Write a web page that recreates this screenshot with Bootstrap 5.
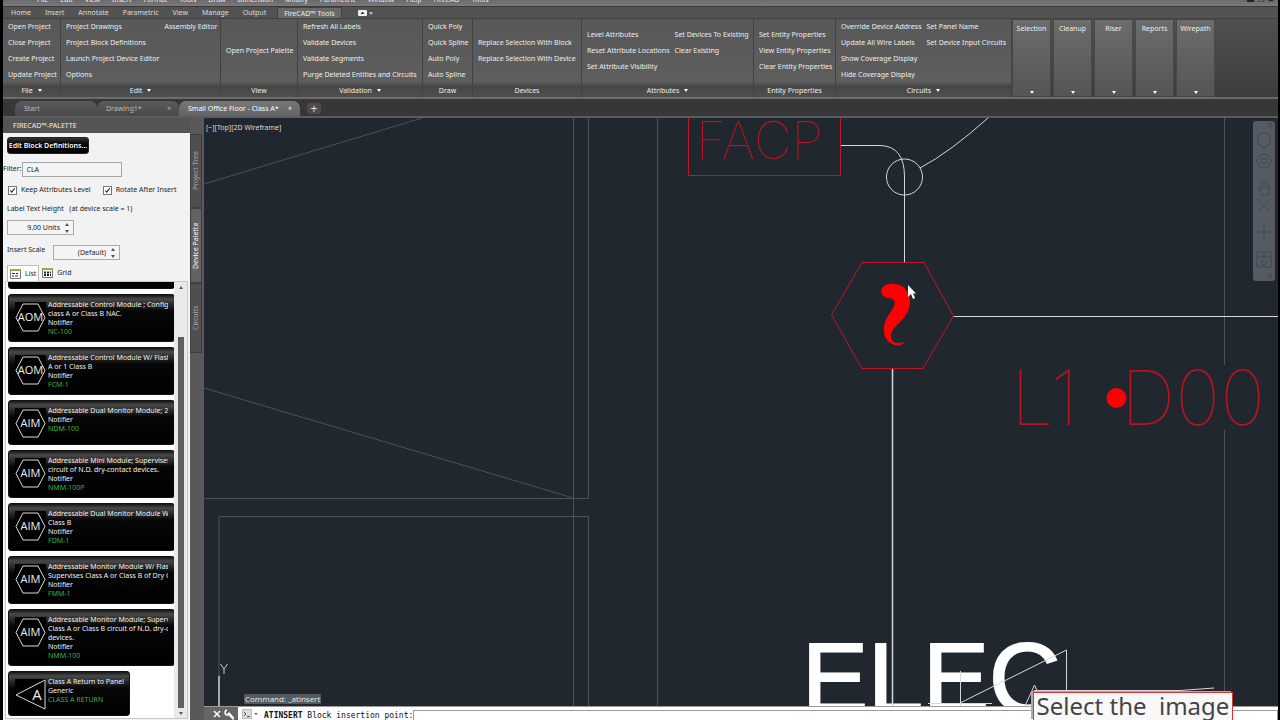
<!DOCTYPE html>
<html lang="en">
<head>
<meta charset="utf-8">
<meta name="viewport" content="width=device-width, initial-scale=1">
<title>FireCAD Tools</title>
<link href="https://cdn.jsdelivr.net/npm/bootstrap@5.3.0/dist/css/bootstrap.min.css" rel="stylesheet">
<style>
  body { background:#000; color:#eee; font-family:"Noto Sans","Open Sans",sans-serif; font-size:7px; line-height:16px; padding:0 2px 0 3px; }
  button, input { font:inherit; color:inherit; }
  button { background:none; border:0; padding:0; text-align:left; white-space:nowrap; }
  a { color:inherit; text-decoration:none; white-space:nowrap; }
  .menubar { height:7px; background:linear-gradient(#6b696b,#7b797b); border-bottom:1px solid #3a3a3a; line-height:12px; padding-left:34px; gap:12px; }
  .wincontrols { color:#222; gap:4px; margin-right:4px; }
  .ribbon-tabs { height:12px; background:#535353; border-bottom:1px solid #404040; line-height:11px; padding-left:8px; gap:14px; color:#dcdcdc; }
  .ribbon-tabs .active { background:#686868; border:1px solid #444; border-bottom:0; padding:0 6px; margin-left:-3px; color:#eee; }
  .ribbon { height:80px; background:linear-gradient(#505050,#3c3c3c); border-bottom:2px solid #6c6c6c; }
  .panel { background:linear-gradient(#585858,#5e5e5e 80%,#464646 86%,#505050); border-right:1px solid #424242; height:78px; }
  .panel-body { height:64px; column-gap:5px; padding-left:5px; }
  .panel-title { height:14px; line-height:15px; gap:5px; }
  .w-file { width:58px; } .w-edit { width:160px; } .w-view { width:77px; } .w-valid { width:125px; }
  .w-draw { width:50px; } .w-dev { width:109px; } .w-attr { width:172px; } .w-ent { width:82px; } .w-circ { width:176px; }
  .caret { width:0; height:0; border:2px solid transparent; border-top:3px solid #fff; border-bottom:0; }
  .drop { width:39px; height:78px; margin-right:2px; background:linear-gradient(#6c6c6c,#555); border:1px solid #484848; padding:1px 0 2px; }
  .doctabs { height:17px; background:#373737; padding:2px 0 0 12px; color:#bbb; }
  .doctab { height:15px; line-height:15px; background:linear-gradient(#5b5b5b,#484848); border-radius:7px 7px 0 0; padding:0 8px 0 9px; }
  .doctab.active { background:linear-gradient(#787878,#636363); color:#fff; }
  .t-start { width:82px; } .t-draw { width:82px; } .t-office { width:121px; }
  .newtab { width:14px; height:11px; background:#4c4c4c; border-radius:3px; color:#ddd; font-size:12px; line-height:10px; margin:2px 0 0 7px; text-align:center; }
  .rule { height:2px; background:#5b5b61; }
  .palette { width:187px; background:#f2f2f2; color:#222; }
  .palette-title { height:15px; background:#545454; color:#eee; padding-left:10px; }
  .black-btn { background:linear-gradient(#333,#000 45%); color:#fff; border-radius:3px; border:1px solid #222; height:17px; line-height:14px; width:82px; text-align:center; font-weight:600; }
  .gap-s { margin-top:3px; } .gap-m { margin-top:5px; } .gap-l { margin-top:7px; }
  .field { background:#f4f4f4; border:1px solid #a5a5a5; width:100px; height:15px; line-height:13px; outline:0; border-radius:0; }
  .spin { width:67px; background:#f4f4f4; border:1px solid #aaa; height:15px; }
  .spin input { width:52px; border:0; background:none; text-align:right; outline:0; height:13px; padding:0; }
  .arrows { gap:4px; margin-left:5px; }
  .up { border:2px solid transparent; border-top:0; border-bottom:3px solid #555; width:0; }
  .down { border:2px solid transparent; border-bottom:0; border-top:3px solid #555; width:0; }
  .tick { appearance:none; width:9px; height:9px; border:1px solid #777; background:#fff; margin:0; }
  .tick:checked { background:#fff url("data:image/svg+xml,%3Csvg xmlns='http://www.w3.org/2000/svg' viewBox='0 0 8 8'%3E%3Cpath d='M1.5 4L3.2 6L6.5 1.5' fill='none' stroke='%23111' stroke-width='1.2'/%3E%3C/svg%3E"); }
  .check-row { gap:4px; padding-left:5px; }
  .check-row label { margin-right:8px; }
  .viewtab { height:16px; padding:0 3px; gap:4px; }
  .viewtab.active { background:#fff; border:1px solid #bbb; border-bottom:0; padding:0 2px; }
  .list-frame { background:#fff; border:1px solid #c8c8c8; margin:0 2px 1px 2px; }
  .items { padding:0 0 2px 2px; gap:5px; }
  .item { width:167px; min-height:45px; background:linear-gradient(#161616,#484848 4px,#060606 16px,#000); border-radius:3px; border:1px solid #111; color:#f0f0f0; padding:5px 6px 5px 6px; gap:2px; line-height:9px; align-items:flex-start; }
  .item > span { overflow:hidden; white-space:nowrap; min-width:0; }
  .item svg { flex:none; width:31px; height:31px; background:#000; margin-top:2px; }
  .item svg polygon { fill:none; stroke:#ddd; }
  .item svg text { fill:#eee; font:11px "Open Sans",sans-serif; text-anchor:middle; }
  .item svg .return { font-size:15px; }
  .item b { color:#35b43b; font-weight:400; }
  .item.short { width:122px; padding-right:2px; }
  .bar { width:13px; background:#e9e9e9; padding:4px 0 3px; }
  .thumb { width:6px; background:#606060; }
  .sidetabs { width:14px; background:#595959; color:#a9a9a9; }
  .sidetab { width:12px; writing-mode:vertical-rl; transform:rotate(180deg); background:#4f4f4f; border:1px solid #3f3f3f; line-height:10px; text-align:center; font-size:7px; padding:0; }
  .sidetab.active { background:#626262; color:#fff; }
  .h-tree { height:74px; } .h-dev { height:75px; } .h-circ { height:70px; }
  .viewport { background:#20272f; }
  .viewlabel { left:2px; top:2px; color:#ddd; }
  .navtool { right:3px; top:3px; width:22px; height:160px; background:#555a64; border-radius:3px; }
  .history { left:40px; bottom:2px; background:#555a60; line-height:10px; padding:0 1px; font-size:8px; font-family:"Open Sans",sans-serif; border-radius:1px; }
  .cmd { height:14px; background:#fff; color:#111; border-top:1px solid #999; }
  .cmd-left { background:#666; width:34px; gap:5px; padding-left:8px; }
  .cmd label { font:8px/17px "DejaVu Sans Mono",monospace; margin:0 0 0 4px; }
  .cmd input { border:1px solid #999; border-bottom:0; height:10px; margin-top:3px; outline:0; }
  .callout { right:45px; bottom:0; height:28px; width:200px; border:1px solid #d33; border-bottom:0; background:#f8f8f8; color:#444; font:24px/26px "Noto Sans",sans-serif; white-space:pre; text-align:center; box-shadow:-2px -1px 0 #aaa; }
</style>
</head>
<body class="vh-100 overflow-hidden d-flex flex-column">
  <nav class="menubar d-flex overflow-hidden align-items-end flex-shrink-0" aria-label="Menu">
    <a href="#">File</a><a href="#">Edit</a><a href="#">View</a><a href="#">Insert</a><a href="#">Format</a><a href="#">Tools</a><a href="#">Draw</a><a href="#">Dimension</a><a href="#">Modify</a><a href="#">Parametric</a><a href="#">Window</a><a href="#">Help</a><a href="#">FireCAD</a><a href="#">Tools</a>
    <span class="wincontrols ms-auto d-flex"><span>▬</span><span>❐</span><span>✖</span></span>
  </nav>
  <nav class="ribbon-tabs d-flex flex-shrink-0" aria-label="Ribbon">
    <a href="#">Home</a><a href="#">Insert</a><a href="#">Annotate</a><a href="#">Parametric</a><a href="#">View</a><a href="#">Manage</a><a href="#">Output</a><a href="#" class="active">FireCAD™ Tools</a>
    <svg width="18" height="12" aria-hidden="true"><rect x="2" y="3" width="9" height="6" rx="1" fill="#eee"/><path d="M4.500 7L6.500 4.500L8.500 7z" fill="#333"/><path d="M13 5.500h4l-2 2z" fill="#eee"/></svg>
  </nav>

  <div class="ribbon d-flex flex-shrink-0">
    <section class="panel w-file"><div class="panel-body d-flex flex-column justify-content-center"><button>Open Project</button><button>Close Project</button><button>Create Project</button><button>Update Project</button></div><div class="panel-title d-flex justify-content-center align-items-center">File <i class="caret"></i></div></section>
    <section class="panel w-edit"><div class="panel-body d-flex"><div class="d-flex flex-column"><button>Project Drawings</button><button>Project Block Definitions</button><button>Launch Project Device Editor</button><button>Options</button></div><div><button>Assembly Editor</button></div></div><div class="panel-title d-flex justify-content-center align-items-center">Edit <i class="caret"></i></div></section>
    <section class="panel w-view"><div class="panel-body d-flex flex-column justify-content-center"><button>Open Project Palette</button></div><div class="panel-title text-center">View</div></section>
    <section class="panel w-valid"><div class="panel-body d-flex flex-column"><button>Refresh All Labels</button><button>Validate Devices</button><button>Validate Segments</button><button>Purge Deleted Entities and Circuits</button></div><div class="panel-title d-flex justify-content-center align-items-center">Validation <i class="caret"></i></div></section>
    <section class="panel w-draw"><div class="panel-body d-flex flex-column"><button>Quick Poly</button><button>Quick Spline</button><button>Auto Poly</button><button>Auto Spline</button></div><div class="panel-title text-center">Draw</div></section>
    <section class="panel w-dev"><div class="panel-body d-flex flex-column justify-content-center"><button>Replace Selection With Block</button><button>Replace Selection With Device</button></div><div class="panel-title text-center">Devices</div></section>
    <section class="panel w-attr"><div class="panel-body d-flex align-items-center"><div class="d-flex flex-column"><button>Level Attributes</button><button>Reset Attribute Locations</button><button>Set Attribute Visibility</button></div><div class="d-flex flex-column pb-3"><button>Set Devices To Existing</button><button>Clear Existing</button></div></div><div class="panel-title d-flex justify-content-center align-items-center">Attributes <i class="caret"></i></div></section>
    <section class="panel w-ent"><div class="panel-body d-flex flex-column justify-content-center"><button>Set Entity Properties</button><button>View Entity Properties</button><button>Clear Entity Properties</button></div><div class="panel-title text-center">Entity Properties</div></section>
    <section class="panel w-circ"><div class="panel-body d-flex"><div class="d-flex flex-column"><button>Override Device Address</button><button>Update All Wire Labels</button><button>Show Coverage Display</button><button>Hide Coverage Display</button></div><div class="d-flex flex-column"><button>Set Panel Name</button><button>Set Device Input Circuits</button></div></div><div class="panel-title d-flex justify-content-center align-items-center">Circuits <i class="caret"></i></div></section>
    <button class="drop d-flex flex-column align-items-center justify-content-between">Selection<i class="caret"></i></button>
    <button class="drop d-flex flex-column align-items-center justify-content-between">Cleanup<i class="caret"></i></button>
    <button class="drop d-flex flex-column align-items-center justify-content-between">Riser<i class="caret"></i></button>
    <button class="drop d-flex flex-column align-items-center justify-content-between">Reports<i class="caret"></i></button>
    <button class="drop d-flex flex-column align-items-center justify-content-between">Wirepath<i class="caret"></i></button>
  </div>

  <nav class="doctabs d-flex flex-shrink-0" aria-label="Drawings">
    <a href="#" class="doctab t-start">Start</a>
    <a href="#" class="doctab t-draw d-flex justify-content-between">Drawing1* <span>×</span></a>
    <a href="#" class="doctab t-office active d-flex justify-content-between">Small Office Floor - Class A* <span>×</span></a>
    <button class="newtab" aria-label="New drawing">+</button>
  </nav>
  <div class="rule flex-shrink-0"></div>

  <main class="d-flex flex-grow-1 overflow-hidden">
    <aside class="palette d-flex flex-column flex-shrink-0">
      <div class="palette-title">FIRECAD™-PALETTE</div>
      <div class="px-1 pt-1"><button class="black-btn d-block">Edit Block Definitions...</button></div>
      <div class="d-flex align-items-center gap-l"><label for="filter">Filter:</label><input id="filter" class="field px-1" value="CLA"></div>
      <div class="check-row d-flex align-items-center gap-m">
        <input class="tick" type="checkbox" id="keep" checked><label for="keep">Keep Attributes Level</label>
        <input class="tick" type="checkbox" id="rot" checked><label for="rot">Rotate After Insert</label>
      </div>
      <label class="px-1 gap-s" for="height">Label Text Height &nbsp; (at device scale = 1)</label>
      <div class="px-1"><div class="spin d-flex align-items-center gap-s"><input id="height" value="9.00 Units"><span class="arrows d-flex flex-column"><i class="up"></i><i class="down"></i></span></div></div>
      <div class="d-flex px-1 gap-l"><label for="scale" class="me-2">Insert Scale</label><div class="spin d-flex align-items-center gap-s"><input id="scale" value="(Default)"><span class="arrows d-flex flex-column"><i class="up"></i><i class="down"></i></span></div></div>
      <div class="d-flex px-1 gap-m">
        <button class="viewtab active d-flex align-items-center"><svg width="11" height="10"><path d="M.5.500h10v9h-10z" fill="#fff" stroke="#777"/><path d="M0 0h11v2H0z" fill="#8db32e"/><path d="M2 4.500h3M6 4.500h2M2 7h2M5 7h3" stroke="#222"/></svg>List</button>
        <button class="viewtab d-flex align-items-center"><svg width="11" height="10"><path d="M.5.500h10v9h-10z" fill="#fff" stroke="#777"/><path d="M0 0h11v2H0z" fill="#8db32e"/><path d="M2 4.500h7M2 7h7" stroke="#222" stroke-width="2" stroke-dasharray="2 1"/></svg>Grid</button>
      </div>
      <div class="list-frame d-flex flex-grow-1 overflow-hidden">
        <div class="items flex-grow-1 d-flex flex-column justify-content-end overflow-hidden">
          <button class="item d-flex flex-shrink-0" aria-label="Addressable Control Module"></button>
          <button class="item d-flex flex-shrink-0"><svg viewBox="0 0 31 31"><polygon points="1,15.500 8,2 23,2 30,15.500 23,29 8,29"/><text x="15.500" y="19">AOM</text></svg><span>Addressable Control Module ; Configures<br>class A or Class B NAC.<br>Notifier<br><b>NC-100</b></span></button>
          <button class="item d-flex flex-shrink-0"><svg viewBox="0 0 31 31"><polygon points="1,15.500 8,2 23,2 30,15.500 23,29 8,29"/><text x="15.500" y="19">AOM</text></svg><span>Addressable Control Module W/ FlashScan<br>A or 1 Class B<br>Notifier<br><b>FCM-1</b></span></button>
          <button class="item d-flex flex-shrink-0"><svg viewBox="0 0 31 31"><polygon points="1,15.500 8,2 23,2 30,15.500 23,29 8,29"/><text x="15.500" y="19">AIM</text></svg><span>Addressable Dual Monitor Module; 2<br>Notifier<br><b>NDM-100</b></span></button>
          <button class="item d-flex flex-shrink-0"><svg viewBox="0 0 31 31"><polygon points="1,15.500 8,2 23,2 30,15.500 23,29 8,29"/><text x="15.500" y="19">AIM</text></svg><span>Addressable Mini Module; Supervises<br>circuit of N.D. dry-contact devices.<br>Notifier<br><b>NMM-100P</b></span></button>
          <button class="item d-flex flex-shrink-0"><svg viewBox="0 0 31 31"><polygon points="1,15.500 8,2 23,2 30,15.500 23,29 8,29"/><text x="15.500" y="19">AIM</text></svg><span>Addressable Dual Monitor Module W/<br>Class B<br>Notifier<br><b>FDM-1</b></span></button>
          <button class="item d-flex flex-shrink-0"><svg viewBox="0 0 31 31"><polygon points="1,15.500 8,2 23,2 30,15.500 23,29 8,29"/><text x="15.500" y="19">AIM</text></svg><span>Addressable Monitor Module W/ FlashScan<br>Supervises Class A or Class B of Dry Contact<br>Notifier<br><b>FMM-1</b></span></button>
          <button class="item d-flex flex-shrink-0"><svg viewBox="0 0 31 31"><polygon points="1,15.500 8,2 23,2 30,15.500 23,29 8,29"/><text x="15.500" y="19">AIM</text></svg><span>Addressable Monitor Module; Supervises<br>Class A or Class B circuit of N.D. dry-contact<br>devices.<br>Notifier<br><b>NMM-100</b></span></button>
          <button class="item short d-flex flex-shrink-0"><svg viewBox="0 0 31 31"><polygon points="1,16 30,1 30,30"/><text class="return" x="22" y="21">A</text></svg><span>Class A Return to Panel<br>Generic<br><b>CLASS A RETURN</b></span></button>
        </div>
        <div class="bar d-flex flex-column align-items-center flex-shrink-0"><i class="up"></i><div class="flex-grow-1 d-flex flex-column pt-5"><div class="thumb flex-grow-1"></div></div><i class="down mt-1"></i></div>
      </div>
    </aside>
    <nav class="sidetabs flex-shrink-0 pt-3" aria-label="Palette pages">
      <button class="sidetab h-tree d-block">Project Tree</button><button class="sidetab h-dev active d-block">Device Palette</button><button class="sidetab h-circ d-block">Circuits</button>
    </nav>
    <div class="flex-grow-1 d-flex flex-column position-relative overflow-hidden">
      <div class="viewport flex-grow-1 position-relative overflow-hidden">
        <svg class="d-block w-100 h-100" viewBox="204 118 1074 588" preserveAspectRatio="xMinYMin slice" fill="none" aria-label="Wiring drawing">
          <g stroke="#4b525a"><path d="M204 184L422 118M204 388L573 498M204 498.500H588.500V118M573.500 118V706M219 706V516.500H588.500V706M657.500 118V706M1224.500 118V365M1224.500 430V706"/></g>
          <g fill="#fff" font-family="Liberation Sans, sans-serif" font-size="99"><text x="802" y="712" stroke="#fff" stroke-width="2">ELEC</text></g>
          <g stroke="#d5d8dc"><path d="M840 145.500H880Q904.500 146 904.500 177V262M920 168Q950 152 988 118M953 316.500H1278"/><path d="M892.500 368V706" stroke-width="1.500"/><circle cx="904.500" cy="177" r="18"/><path d="M960.500 706V671M928 703.500H992M960 703L1066.500 650V706M1025 706L1034.500 685L1044 706M1034 690.500H1180L1214 688"/></g>
          <g stroke="#c01822"><path d="M688.500 118V175.500H840.500V118M831.500 315L862 262.500H924L953.500 316L923 368.500H862Z"/></g>
          <g fill="#b51420" font-family="Inter, Roboto, sans-serif" font-weight="100"><text x="696" y="159" font-size="52">FACP</text><text x="1011" y="425" font-size="76">L1</text><text x="1121" y="425" font-size="76">D00</text></g>
          <circle cx="1116.500" cy="398" r="10" fill="#f00"/>
          <path fill="#f00" d="M890 284C902 282 911 291 910 304C908 320 893 324 891 335C890 342 896 345 904 342C902 347 894 346 889 342C881 335 883 322 890 313C895 306 898 299 889 298C879 297 878 285 890 284Z"/>
          <path fill="#fff" d="M908 285V297L911 294L913 299L915 298L913 293.500H916Z"/>
          <path stroke="#ccc" d="M220.500 664L224 669L227.500 664M224 669V674"/><path stroke="#aaa" stroke-width="2" d="M219 676V706"/>
        </svg>
        <div class="viewlabel position-absolute">[−][Top][2D Wireframe]</div>
        <div class="navtool position-absolute"><svg width="22" height="160" fill="none" stroke="#424852"><path d="M5 14L11 11L17 14V23L11 27L5 23Z"/><circle cx="11" cy="40" r="7"/><circle cx="11" cy="40" r="3"/><path d="M8 70V60M11 68V58M14 68V61M5 66L9 74H15L17 64M4 78L17 91M17 78L4 91M11 102V120M4 111H18M4 131H18V146H4ZM4 136H18M11 131V136M9 139L14 142L9 145Z"/><circle cx="17" cy="4" r="2"/><circle cx="17" cy="155" r="2"/></svg></div>
        <div class="history position-absolute">Command: _atinsert</div>
      </div>
      <div class="cmd d-flex flex-shrink-0">
        <div class="cmd-left d-flex align-items-center"><svg width="22" height="12" fill="none" stroke="#fff"><path d="M2 3L8 9M8 3L2 9" stroke-width="1.500"/><path d="M16 5L22 11" stroke-width="2.500"/><path d="M15 2A2.500 2.500 0 1 0 18 5" stroke-width="1.500"/></svg></div>
        <svg width="22" height="13" fill="none"><rect x="4.500" y="2.500" width="9" height="9" fill="#ddd" stroke="#bbb"/><path d="M6 5L8 7L6 9M9 9.500H12" stroke="#555"/><path d="M16 6h4l-2 2z" fill="#666"/></svg>
        <label for="cmdline"><strong>ATINSERT</strong> Block insertion point:</label>
        <input id="cmdline" class="flex-grow-1">
      </div>
      <div class="callout position-absolute">Select the  image</div>
    </div>
  </main>
<script src="https://cdn.jsdelivr.net/npm/bootstrap@5.3.0/dist/js/bootstrap.bundle.min.js"></script>
</body>
</html>
